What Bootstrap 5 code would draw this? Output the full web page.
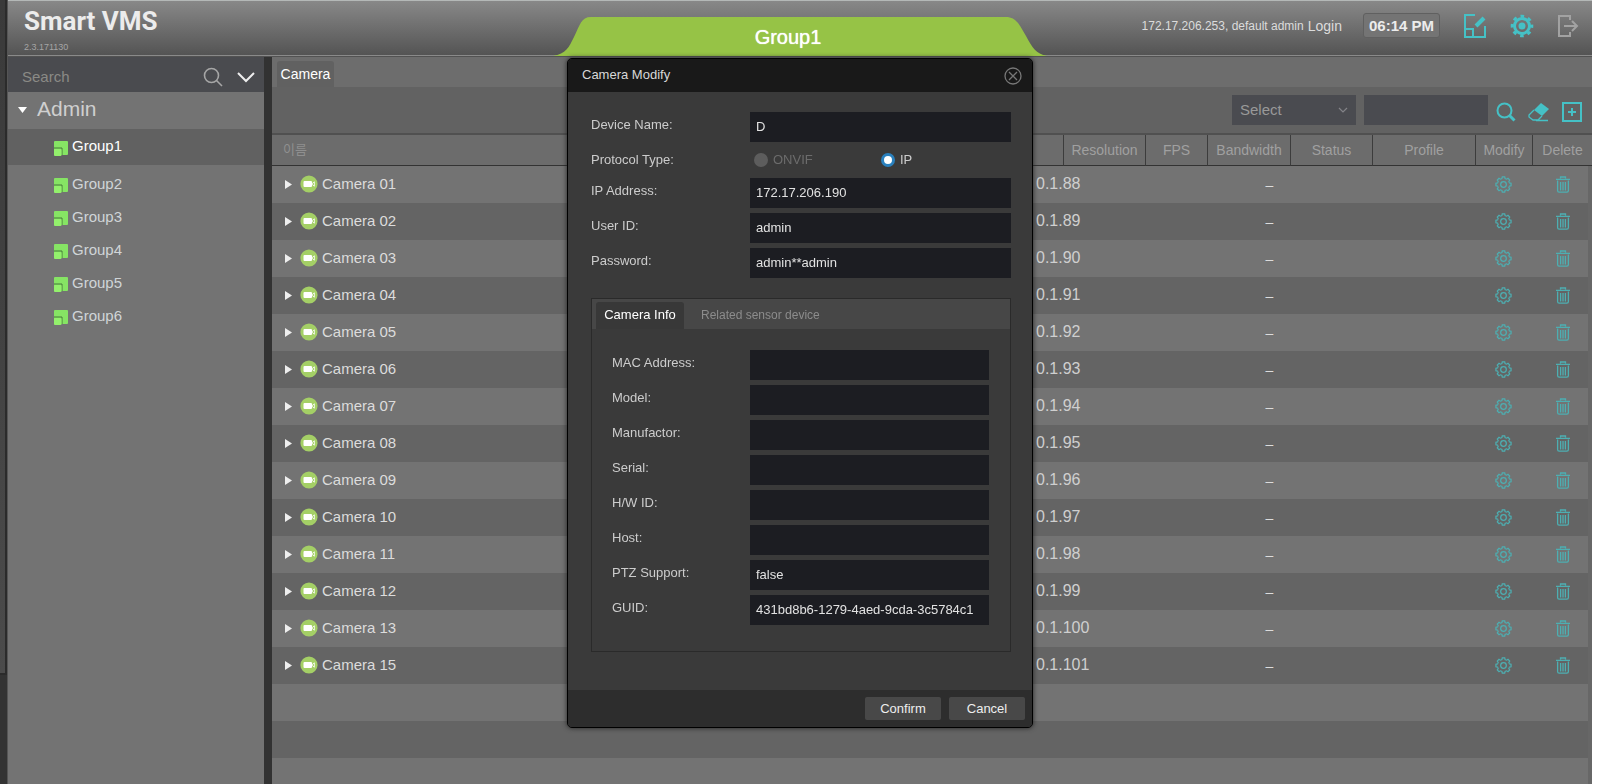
<!DOCTYPE html>
<html lang="en">
<head>
<meta charset="utf-8">
<meta name="viewport" content="width=device-width, initial-scale=1">
<title>Smart VMS</title>
<link href="https://cdn.jsdelivr.net/npm/bootstrap@5.3.0/dist/css/bootstrap.min.css" rel="stylesheet">
<style>
  :root { --teal: #45c1c6; --teal-dim: #4dafb2; --field: #1c1d22; --sans: "Liberation Sans", "Noto Sans CJK KR", Arial, sans-serif; }
  body { font-family: var(--sans); font-size: 14px; line-height: 20px; color: #dcdcdc; background: #fff; overflow: hidden; }
  .shell { padding-right: 8px; }
  .rail { width: 8px; background: #333; border-right: 1px solid #555; }
  .rail-top { height: 675px; background: linear-gradient(#3a3a3a, #4b4b4b); border-right: 2px solid #2b2b2b; border-bottom: 2px solid #2b2b2b; }

  /* top bar */
  .topbar { display: grid; grid-template-columns: 1fr 494px 1fr; height: 57px; background: linear-gradient(#888, #535353); border-top: 1px solid #b4b8b7; border-bottom: 1px solid #525252; box-shadow: inset 0 -1px #8a8a8a; }
  .brand { font: bold 26px/32px Roboto, var(--sans); color: #ececec; }
  .version { font-size: 9px; line-height: 12px; color: #a5a5a5; }
  .group-tab { height: 39px; color: #fff; font-size: 20px; line-height: 40px; text-shadow: 0 0 1px #fff; }
  .group-tab svg { inset: 0; }
  .status-area { padding: 0 13px 6px 0; }
  .clock { background: #747474; border: 1px solid #606060; border-radius: 3px; font-size: 15px; line-height: 23px; padding: 0 5px; margin-left: 21px; color: #ececec; }
  .login-ip { font-size: 12px; }
  .icon-btn { border: 0; padding: 0; background: none; color: var(--teal); display: flex; }

  /* group tree */
  .sidebar { width: 256px; background: #737373; }
  .side-search { height: 35px; background: #4a4b4f; }
  .side-search input { background: none; border: 0; font-size: 15px; padding: 0 0 0 14px; color: #ddd; outline: 0; }
  .side-search input::placeholder { color: #8a8a86; opacity: 1; }
  .side-search .find { margin-right: 13px; }
  .tree-root { height: 37px; font-size: 21px; color: #cfcfcf; }
  .tree a { height: 33px; padding-left: 46px; padding-bottom: 2px; font-size: 15px; color: #d0d5d8; text-decoration: none; }
  .tree a.active { height: 36px; margin-bottom: 3px; background: #616161; color: #fff; }
  .splitter { width: 8px; background: #323232; }

  /* camera list */
  .tabstrip { height: 30px; background: #6d6d6d; padding-left: 5px; }
  .tabstrip a { height: 26px; width: 57px; background: #616161; border-radius: 3px 3px 0 0; color: #fff; text-decoration: none; line-height: 26px; }
  .tools { height: 48px; background: #626262; border-bottom: 2px solid #505050; padding-right: 10px; }
  .tools .tool-field { width: 124px; height: 30px; background-color: #4a4b50; border: 0; border-radius: 0; color: #999; font-size: 15px; line-height: 20px; padding: 5px 8px; }
  .tools .form-select { --bs-form-select-bg-img: url("data:image/svg+xml,%3Csvg xmlns='http://www.w3.org/2000/svg' viewBox='0 0 10 6'%3E%3Cpath d='M1 1l4 4 4-4' fill='none' stroke='%23838388' stroke-width='1.2'/%3E%3C/svg%3E"); background-size: 10px 6px; background-position: right 8px center; }
  .cams { table-layout: fixed; border-collapse: separate; border-spacing: 0; width: 100%; }
  .cams th { height: 31px; padding: 0; background: #6c6c6c; border-bottom: 1px solid #333; border-left: 1px solid #3c3c3c; font-weight: 400; color: #a0a0a0; text-align: center; }
  .cams th.bare { border-left: 0; color: #8f8f8f; font-size: 13px; text-align: left; padding-left: 11px; }
  .cams td { height: 37px; padding: 0; background: #737373; white-space: nowrap; vertical-align: middle; }
  .cams tr:nth-child(even) td { background: #646464; }
  .cams td:last-child { border-right: 4px solid #676767; padding-left: 6px; }
  .cams .addr { font-size: 16px; color: #cfcfcf; padding: 0 0 2px 1px; }
  .cams .cam-name { font-size: 15px; padding: 0 0 2px 13px; }
  .cams .cam-name svg:first-child { margin-top: 2px; }
  .cams .rate { padding-left: 42px; }
  .cams .icon-btn { color: var(--teal-dim); }

  /* dialog */
  .modal-dialog { --bs-modal-width: 466px; margin-top: 58px; }
  .modal-content { --bs-modal-border-radius: 5px; font-size: 13px; color: #ccc; background: #3a3a3a; border: 1px solid #000; box-shadow: 0 0 5px #222; overflow: hidden; }
  .modal-header { height: 33px; padding: 0 10px 0 14px; background: #191919; border: 0; border-radius: 0; }
  .modal-title { font-size: 13px; line-height: 20px; font-weight: 400; color: #d8d8d8; margin-bottom: 2px; }
  .modal-body { padding: 20px 21px 38px 23px; }
  .line + .line { margin-top: 5px; }
  .line .tag { width: 159px; padding-bottom: 4px; }
  .line input.entry { min-width: 0; height: 30px; background: var(--field); border: 0; color: #e2e2e2; padding: 0 6px 2px; flex: 1; outline: 0; }
  .protocol { height: 36px; }
  .protocol .tag { width: 159px; }
  .protocol .choice { width: 127px; padding-left: 4px; gap: 5px; }
  .protocol .choice.off { color: #6c6c6c; }
  .protocol input { appearance: none; width: 14px; height: 14px; margin: 0; border-radius: 50%; background: #5d5d5d; }
  .protocol input:checked { background: #fff; border: 3px solid #2a80bd; }
  .info-panel { margin-top: 20px; border: 1px solid #2a2a2a; }
  .info-tabs { height: 30px; background: #474747; padding-left: 4px; }
  .info-tabs button { border: 0; background: none; height: 27px; padding: 0 8px 2px; color: #fff; border-radius: 3px 3px 0 0; }
  .info-tabs button.on { background: #383838; width: 88px; }
  .info-tabs button.off { font-size: 12px; color: #8c8c8c; margin-left: 9px; }
  .info-fields { padding: 21px 21px 26px 20px; }
  .info-fields .line .tag { width: 138px; }
  .modal-footer { height: 37px; padding: 0 7px; background: #2d2d2d; border: 0; border-radius: 0; gap: 8px; }
  .modal-footer button { width: 76px; height: 23px; margin: 0; padding: 0; border: 0; border-radius: 2px; background: #484848; color: #eee; }
</style>
</head>
<body>
<svg class="d-none" aria-hidden="true">
  <symbol id="i-group" viewBox="0 0 14 15"><rect width="14" height="14" rx="1" fill="#86e464"/><path d="M0 7h8v7" fill="none" stroke="#477a3b" stroke-width="1"/><rect y="8" width="7.500" height="7" rx="1" fill="#93f06c"/></symbol>
  <symbol id="i-cam" viewBox="0 0 18 18"><circle cx="9" cy="9" r="8.6" fill="#a4cf66"/><rect x="3.5" y="6" width="8.5" height="6" rx="1" fill="#fff"/><path d="M12.4 8.3l2-1.5v4.4l-2-1.5z" fill="none" stroke="#fff" stroke-width=".8"/></symbol>
  <symbol id="i-gear" viewBox="0 0 18 18"><g fill="none" stroke="currentColor" stroke-width="1.3"><path id="tooth" d="M6.590 3.180L7.300 2.700 7.700 1h2.600l.4 1.700.71.48"/><use href="#tooth" transform="rotate(45 9 9)"/><use href="#tooth" transform="rotate(90 9 9)"/><use href="#tooth" transform="rotate(135 9 9)"/><use href="#tooth" transform="rotate(180 9 9)"/><use href="#tooth" transform="rotate(225 9 9)"/><use href="#tooth" transform="rotate(270 9 9)"/><use href="#tooth" transform="rotate(315 9 9)"/><circle cx="9" cy="9" r="3"/></g></symbol>
  <symbol id="i-trash" viewBox="0 0 14 17"><path d="M4.500 2.500V1h5v1.500M0 3.300h14M1.600 4.500v10c0 1 .5 1.700 1.500 1.700h7.800c1 0 1.500-.7 1.500-1.700v-10M4.600 6v8.500M7 6v8.500M9.400 6v8.500" fill="none" stroke="currentColor" stroke-width="1.3"/></symbol>
</svg>

<div class="shell d-flex vh-100">
  <div class="rail flex-shrink-0"><div class="rail-top"></div></div>
  <div class="flex-grow-1 d-flex flex-column overflow-hidden">
    <header class="topbar flex-shrink-0">
      <div class="ps-3 pt-1">
        <div class="brand ms-0 mb-0">Smart VMS</div>
        <div class="version pt-1">2.3.171130</div>
      </div>
      <div class="group-tab position-relative align-self-end text-center">
        <svg class="position-absolute w-100 h-100" viewBox="0 0 494 39" preserveAspectRatio="none"><path d="M0 39C13 37 16 30 21 20 27 8 28 0 38 0H453C463 0 466 7 473 19 479 30 483 37 494 39z" fill="#96c346"/></svg>
        <span class="position-relative pe-4">Group1</span>
      </div>
      <div class="status-area d-flex align-items-center justify-content-end">
        <span class="login-ip me-1">172.17.206.253, default admin</span><span>Login</span>
        <strong class="clock">06:14 PM</strong>
        <button class="icon-btn ms-4" aria-label="Edit layout"><svg width="22" height="24" viewBox="0 0 22 24" fill="none" stroke="currentColor" stroke-width="2"><path d="M11 1H1v22h20V12M1 15h8v8"/><path d="M12 12l8-8" stroke-width="4"/></svg></button>
        <button class="icon-btn ms-4" aria-label="Settings"><svg width="24" height="24" viewBox="0 0 24 24" fill="none" stroke="currentColor"><circle cx="12" cy="12" r="7.500" stroke-width="3"/><circle cx="12" cy="12" r="9.800" stroke-width="3" stroke-dasharray="3.600 4.097" stroke-dashoffset="1.800"/><circle cx="12" cy="12" r="3.500" fill="currentColor" stroke="none"/></svg></button>
        <button class="icon-btn ms-4" aria-label="Log out"><svg width="21" height="24" viewBox="0 0 21 24" fill="none" stroke="#a2a2a2" stroke-width="2"><path d="M12 6V2H1v20h11v-4M6 12h13M14 7l5 5-5 5"/></svg></button>
      </div>
    </header>

    <div class="d-flex flex-grow-1 overflow-hidden">
      <nav class="sidebar flex-shrink-0" aria-label="Groups">
        <div class="side-search d-flex align-items-center pt-1">
          <input class="flex-grow-1 w-50" type="search" placeholder="Search" aria-label="Search">
          <button class="icon-btn find" aria-label="Find"><svg width="20" height="20" viewBox="0 0 20 20" fill="none" stroke="#a6a6a6" stroke-width="1.600"><circle cx="8.500" cy="8.500" r="7"/><path d="M13.500 13.500l5.500 5.500"/></svg></button>
          <button class="icon-btn me-2" aria-label="Expand"><svg width="20" height="12" viewBox="0 0 20 12" fill="none" stroke="#eee" stroke-width="2"><path d="M2 2l8 8 8-8"/></svg></button>
        </div>
        <div class="tree-root d-flex align-items-center pb-1">
          <svg class="ms-2 me-2 mt-1" width="13" height="7" viewBox="0 0 13 7"><path d="M2 0h9L6.500 6z" fill="#fff"/></svg><span>Admin</span>
        </div>
        <ul class="tree list-unstyled mb-0" id="tree"></ul>
      </nav>
      <div class="splitter flex-shrink-0"></div>
      <main class="flex-grow-1 overflow-hidden">
        <div class="tabstrip d-flex align-items-end"><a href="#" class="text-center">Camera</a></div>
        <div class="tools d-flex align-items-center justify-content-end">
          <select class="form-select tool-field me-2" aria-label="Search field"><option>Select</option></select>
          <input class="tool-field me-2" type="text" aria-label="Search text">
          <button class="icon-btn me-2 pt-1" aria-label="Search cameras"><svg width="20" height="20" viewBox="0 0 20 20" fill="none" stroke="currentColor"><circle cx="8.500" cy="8.500" r="7" stroke-width="2"/><path d="M13.500 13.500l5 5" stroke-width="3"/></svg></button>
          <button class="icon-btn ms-1 me-2 pt-1" aria-label="Clear"><svg width="22" height="20" viewBox="0 0 22 20"><path d="M13 1l8 6-7 7-8-6z" fill="currentColor"/><path d="M6 8l-5 5v2l4 3h5l4-4M8 18.500h12" fill="none" stroke="currentColor" stroke-width="1.300"/></svg></button>
          <button class="icon-btn ms-1 pt-1" aria-label="Add camera"><svg width="20" height="20" viewBox="0 0 20 20" fill="none" stroke="currentColor" stroke-width="2"><path d="M1 1h18v18H1zM10 6v8M6 10h8"/></svg></button>
        </div>
        <table class="cams">
          <colgroup><col><col style="width:28px"><col style="width:82px"><col style="width:62px"><col style="width:83px"><col style="width:82px"><col style="width:103px"><col style="width:57px"><col style="width:60px"></colgroup>
          <thead><tr><th class="bare">이름</th><th class="bare"></th><th>Resolution</th><th>FPS</th><th>Bandwidth</th><th>Status</th><th>Profile</th><th>Modify</th><th>Delete</th></tr></thead>
          <tbody id="rows"></tbody>
        </table>
      </main>
    </div>
  </div>
</div>

<div class="modal d-block" role="dialog" aria-labelledby="dlgTitle">
  <div class="modal-dialog">
    <form class="modal-content">
      <div class="modal-header">
        <h2 class="modal-title" id="dlgTitle">Camera Modify</h2>
        <button type="button" class="icon-btn" aria-label="Close"><svg width="18" height="18" viewBox="0 0 18 18" fill="none" stroke="#777" stroke-width="1.300"><circle cx="9" cy="9" r="8"/><path d="M5 5l8 8M13 5l-8 8"/></svg></button>
      </div>
      <div class="modal-body">
        <div class="line d-flex align-items-center"><label class="tag" for="f-name">Device Name:</label><input class="entry" id="f-name" value="D"></div>
        <div class="protocol d-flex align-items-center" role="radiogroup" aria-labelledby="f-proto">
          <span class="tag" id="f-proto">Protocol Type:</span>
          <label class="choice off d-flex align-items-center"><input type="radio" name="proto" disabled>ONVIF</label>
          <label class="choice d-flex align-items-center"><input type="radio" name="proto" checked>IP</label>
        </div>
        <div class="line d-flex align-items-center"><label class="tag" for="f-ip">IP Address:</label><input class="entry" id="f-ip" value="172.17.206.190"></div>
        <div class="line d-flex align-items-center"><label class="tag" for="f-user">User ID:</label><input class="entry" id="f-user" value="admin"></div>
        <div class="line d-flex align-items-center"><label class="tag" for="f-pass">Password:</label><input class="entry" id="f-pass" value="admin**admin"></div>

        <div class="info-panel">
          <div class="info-tabs d-flex align-items-end">
            <button type="button" class="on">Camera Info</button>
            <button type="button" class="off">Related sensor device</button>
          </div>
          <div class="info-fields">
            <div class="line d-flex align-items-center"><label class="tag" for="c-mac">MAC Address:</label><input class="entry" id="c-mac"></div>
            <div class="line d-flex align-items-center"><label class="tag" for="c-model">Model:</label><input class="entry" id="c-model"></div>
            <div class="line d-flex align-items-center"><label class="tag" for="c-man">Manufactor:</label><input class="entry" id="c-man"></div>
            <div class="line d-flex align-items-center"><label class="tag" for="c-serial">Serial:</label><input class="entry" id="c-serial"></div>
            <div class="line d-flex align-items-center"><label class="tag" for="c-hw">H/W ID:</label><input class="entry" id="c-hw"></div>
            <div class="line d-flex align-items-center"><label class="tag" for="c-host">Host:</label><input class="entry" id="c-host"></div>
            <div class="line d-flex align-items-center"><label class="tag" for="c-ptz">PTZ Support:</label><input class="entry" id="c-ptz" value="false"></div>
            <div class="line d-flex align-items-center"><label class="tag" for="c-guid">GUID:</label><input class="entry" id="c-guid" value="431bd8b6-1279-4aed-9cda-3c5784c1"></div>
          </div>
        </div>
      </div>
      <div class="modal-footer">
        <button type="button">Confirm</button>
        <button type="button">Cancel</button>
      </div>
    </form>
  </div>
</div>

<script src="https://cdn.jsdelivr.net/npm/bootstrap@5.3.0/dist/js/bootstrap.bundle.min.js"></script>
<script>
  document.getElementById('tree').innerHTML = [1, 2, 3, 4, 5, 6].map(n =>
    `<li><a href="#" class="d-flex align-items-center${n === 1 ? ' active' : ''}"><svg class="me-1 mt-1" width="14" height="15"><use href="#i-group"/></svg>Group${n}</a></li>`).join('');

  const numbers = ['01', '02', '03', '04', '05', '06', '07', '08', '09', '10', '11', '12', '13', '15'];
  const filled = numbers.map((num, i) => `<tr>
    <td class="cam-name"><div class="d-flex align-items-center"><svg class="me-2" width="7" height="9" viewBox="0 0 7 9"><path d="M0 0l7 4.500L0 9z" fill="#eee"/></svg><svg class="me-1" width="18" height="18"><use href="#i-cam"/></svg>Camera ${num}</div></td>
    <td class="addr">0.1.${88 + i}</td><td></td><td></td><td class="text-center rate">–</td><td></td><td></td>
    <td><button class="icon-btn mx-auto" aria-label="Modify Camera ${num}"><svg width="17" height="17"><use href="#i-gear"/></svg></button></td>
    <td><button class="icon-btn mx-auto" aria-label="Delete Camera ${num}"><svg width="14" height="17"><use href="#i-trash"/></svg></button></td></tr>`);
  const blank = '<tr>' + '<td></td>'.repeat(9) + '</tr>';
  document.getElementById('rows').innerHTML = filled.join('') + blank.repeat(3);
</script>
</body>
</html>
